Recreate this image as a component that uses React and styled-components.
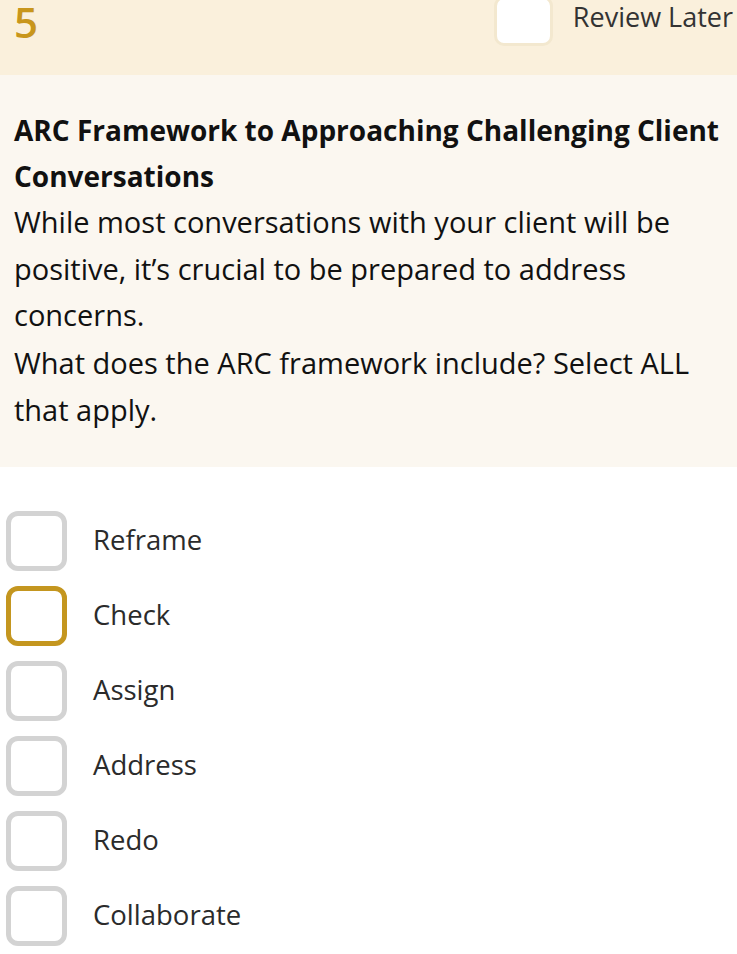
import React, { useState } from 'react';
import styled, { createGlobalStyle } from 'styled-components';

const GlobalStyle = createGlobalStyle`
  * { box-sizing: border-box; }
  body {
    margin: 0;
    background: #ffffff;
    font-family: 'Open Sans', 'Noto Sans', sans-serif;
    color: #222;
  }
`;

const options = ['Reframe', 'Check', 'Assign', 'Address', 'Redo', 'Collaborate'];

const App = () => {
  const [picked, setPicked] = useState([]);
  const focused = 'Check';

  const toggle = (name) =>
    setPicked((p) => (p.includes(name) ? p.filter((n) => n !== name) : [...p, name]));

  return (
    <>
      <GlobalStyle />
      <Page>
        <TopBar>
          <Number>5</Number>
          <ReviewLater>
            <ReviewBox />
            <ReviewLabel>Review Later</ReviewLabel>
          </ReviewLater>
        </TopBar>
        <Question>
          <Title>ARC Framework to Approaching Challenging Client Conversations</Title>
          <Body>
            While most conversations with your client will be positive, it’s crucial to be prepared
            to address concerns.
          </Body>
          <Prompt>What does the ARC framework include? Select ALL that apply.</Prompt>
        </Question>
        <OptionList>
          {options.map((name) => (
            <OptionRow key={name} onClick={() => toggle(name)}>
              <Box $focused={name === focused} $checked={picked.includes(name)} />
              <OptionLabel>{name}</OptionLabel>
            </OptionRow>
          ))}
        </OptionList>
      </Page>
    </>
  );
};

export default App;

const Page = styled.div`
  width: 737px;
  min-height: 954px;
  overflow: hidden;
  background: #fff;
`;

const TopBar = styled.div`
  height: 75px;
  background: #faf0dc;
  display: flex;
  justify-content: space-between;
  align-items: flex-start;
  padding: 0 4px 0 14px;
`;

const Number = styled.div`
  font-size: 42px;
  line-height: 44px;
  font-weight: 600;
  color: #c8961c;
`;

const ReviewLater = styled.div`
  display: flex;
  align-items: flex-start;
  gap: 20px;
`;

const ReviewBox = styled.div`
  width: 59px;
  height: 50px;
  margin-top: -4px;
  background: #fff;
  border: 3px solid #f3e8cf;
  border-radius: 10px;
`;

const ReviewLabel = styled.div`
  font-size: 27px;
  line-height: 34px;
  color: #333;
`;

const Question = styled.div`
  background: #fbf7f0;
  padding: 32px 8px 0 14px;
  height: 392px;
`;

const Title = styled.h1`
  margin: 0;
  font-size: 28px;
  line-height: 46px;
  font-weight: 700;
  color: #111;
`;

const Body = styled.p`
  margin: 0;
  font-size: 29px;
  line-height: 46.5px;
  font-weight: 400;
  color: #111;
`;

const Prompt = styled(Body)`
  line-height: 47px;
`;

const OptionList = styled.div`
  display: flex;
  flex-direction: column;
  gap: 15px;
  padding: 44px 0 0 6px;
`;

const OptionRow = styled.div`
  display: flex;
  align-items: center;
  gap: 26px;
  cursor: pointer;
`;

const Box = styled.div`
  width: 61px;
  height: 60px;
  flex: none;
  border-radius: 12px;
  border: 5px solid ${(p) => (p.$focused ? '#c4961f' : '#d3d3d3')};
  background: ${(p) => (p.$checked ? '#c4961f' : '#fff')};
`;

const OptionLabel = styled.span`
  font-size: 27.5px;
  padding-bottom: 4px;
  color: #2b2b2b;
`;
